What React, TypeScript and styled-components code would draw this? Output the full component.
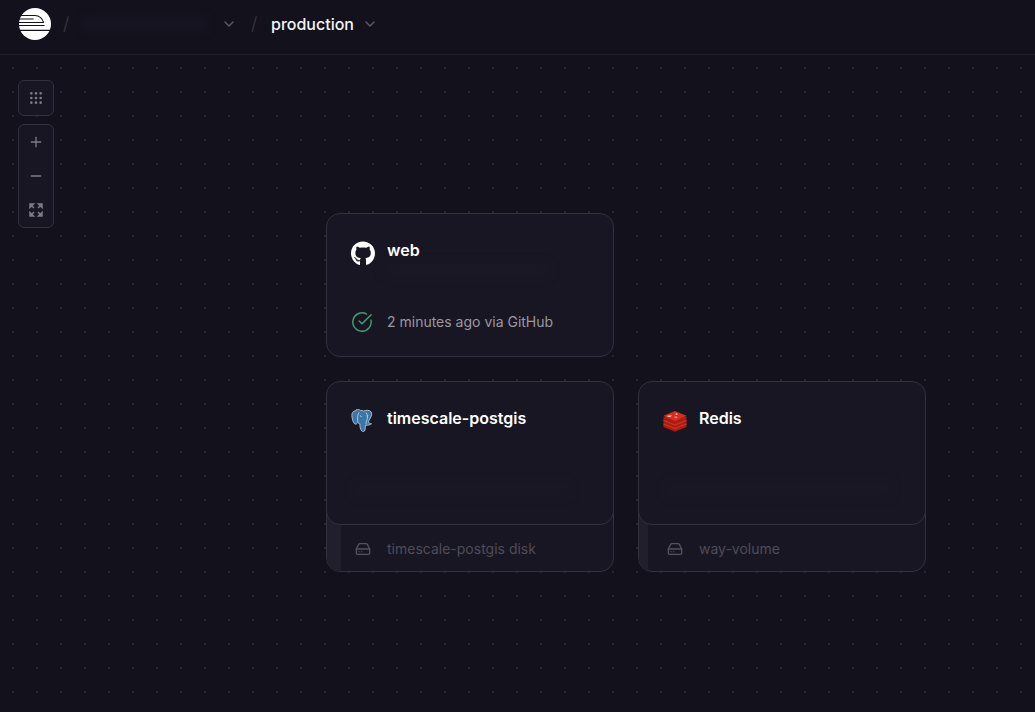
import React from "react";
import styled, { createGlobalStyle } from "styled-components";
import { ChevronDown, Plus, Minus, Grip, CircleCheckBig, HardDrive } from "lucide-react";
import { FaGithub } from "react-icons/fa";

const Global = createGlobalStyle`
  html, body { margin: 0; padding: 0; height: 100%; background: #13111c; overflow: hidden; }
  #root { height: 100%; }
  * { box-sizing: border-box; }
`;

const Page = styled.div`
  width: 1035px;
  height: 712px;
  display: flex;
  flex-direction: column;
  background: #13111c;
  font-family: Inter, "Liberation Sans", sans-serif;
`;

const Header = styled.header`
  height: 55px;
  flex: none;
  display: flex;
  align-items: center;
  padding: 0 0 7px 19px;
  border-bottom: 1px solid #211f2b;
`;

const Slash = styled.span<{ $gap: number }>`
  color: #3a3845;
  font-size: 18px;
  font-weight: 300;
  margin-left: ${(p) => p.$gap}px;
  width: 6px;
`;

const BlurredName = styled.div`
  width: 124px;
  height: 12px;
  margin-left: 14px;
  background: #171523;
  border-radius: 6px;
  filter: blur(5px);
`;

const Caret = styled(ChevronDown)<{ $gap: number }>`
  width: 16px;
  height: 16px;
  margin-left: ${(p) => p.$gap}px;
  color: #5e5c69;
  flex: none;
`;

const EnvName = styled.span`
  margin-left: 14px;
  color: #f4f4f6;
  font-size: 16px;
  line-height: 20px;
  font-weight: 500;
`;

const Canvas = styled.main`
  position: relative;
  flex: 1;
  background-color: #13111c;
  background-image: radial-gradient(circle at center, #272531 0.7px, transparent 1px);
  background-size: 24px 24px;
  background-position: 1px 1px;
`;

const Controls = styled.div`
  position: absolute;
  left: 18px;
  top: 25px;
  display: flex;
  flex-direction: column;
  gap: 8px;
`;

const ControlGroup = styled.div`
  width: 36px;
  display: flex;
  flex-direction: column;
  background: #181622;
  border: 1px solid #33313d;
  border-radius: 6px;
`;

const ControlButton = styled.button`
  height: 34px;
  padding: 0;
  display: flex;
  align-items: center;
  justify-content: center;
  border: none;
  background: transparent;
  color: #7d7b87;
`;

const Node = styled.section<{ $x: number; $y: number }>`
  position: absolute;
  left: ${(p) => p.$x}px;
  top: ${(p) => p.$y}px;
  width: 288px;
`;

const Card = styled.div<{ $h: number }>`
  position: relative;
  z-index: 1;
  height: ${(p) => p.$h}px;
  background: #181622;
  border: 1px solid #33313d;
  border-radius: 14px;
  overflow: hidden;
`;

const TitleRow = styled.div`
  display: flex;
  align-items: flex-start;
  height: 30px;
  margin-top: 26px;
  padding-left: 24px;
`;

const IconSlot = styled.div`
  width: 24px;
  height: 24px;
  margin: 1px 12px 0 0;
  flex: none;
  display: flex;
  align-items: center;
  justify-content: center;
  color: #fff;
`;

const Title = styled.h3`
  margin: 0;
  color: #fff;
  font-size: 16px;
  line-height: 20px;
  font-weight: 600;
`;

const BlurLine = styled.div<{ $x: number; $w: number; $y: number }>`
  position: absolute;
  left: ${(p) => p.$x}px;
  top: ${(p) => p.$y}px;
  width: ${(p) => p.$w}px;
  height: 8px;
  background: #1a1925;
  filter: blur(6px);
`;

const StatusRow = styled.div`
  display: flex;
  align-items: center;
  margin-top: 39px;
  padding-left: 24px;
  color: #9a98a3;
  font-size: 14px;
  line-height: 20px;
`;

const StatusIcon = styled(CircleCheckBig)`
  width: 22px;
  height: 22px;
  margin-left: -2px;
  color: #3f9e72;
  flex: none;
`;

const Volume = styled.div<{ $strip: number }>`
  height: 72px;
  margin-top: -25px;
  padding: 24px 0 0 ${(p) => p.$strip}px;
  background: #181622;
  border: 1px solid #33313d;
  border-radius: 14px;
  overflow: hidden;
  position: relative;
  display: flex;
  &::before {
    content: "";
    position: absolute;
    left: 0;
    top: 0;
    bottom: 0;
    width: ${(p) => p.$strip}px;
    background: #211f2b;
  }
`;

const VolumeRow = styled.div<{ $offset: number }>`
  display: flex;
  align-items: center;
  height: 47px;
  padding-left: ${(p) => p.$offset}px;
  color: #4e4c59;
  font-size: 14px;
`;

const VolumeIcon = styled(HardDrive)`
  width: 16px;
  height: 16px;
  margin-right: 16px;
  color: #54525f;
  flex: none;
`;

const Logo = () => (
  <svg width="32" height="32" viewBox="0 0 32 32" style={{ flex: "none" }}>
    <circle cx="16" cy="16" r="16" fill="#fff" />
    <path d="M0 7.500h16c3.800 0 7.200 2.600 8.700 7.200" stroke="#13111c" fill="none" strokeWidth="1.100" />
    <path d="M0 11h14.500M0 14.500h25M0 17.500h25.500M0 22.300h32" stroke="#13111c" fill="none" strokeWidth="1.200" />
  </svg>
);

const Fit = () => (
  <svg width="16" height="16" viewBox="0 0 16 16" fill="#7d7b87" stroke="#7d7b87" strokeWidth="1.500">
    <path d="M2 5.500V2h3.500z" />
    <path d="M2.500 2.500l3.500 3.500" />
    <path d="M14 5.500V2h-3.500z" />
    <path d="M13.500 2.500L10 6" />
    <path d="M2 10.500V14h3.500z" />
    <path d="M2.500 13.500L6 10" />
    <path d="M14 10.500V14h-3.500z" />
    <path d="M13.500 13.500L10 10" />
  </svg>
);

const Postgres = () => (
  <svg width="24" height="24" viewBox="0 0 24 24">
    <path
      d="M4.800 1.800C2 1.800.4 4 1 8c.4 2.900 1.300 6 2.900 7 1 .6 2-.3 2.800-1.400.8.700 1.500 1 2.100 1.100.1 2.200.3 5.300 1.700 7 1 1.200 3.100 1.100 3.500-.6.300-1.500.3-3.500.5-5 2 .6 4.800-.4 6-1.300-1.900-.3-3.200-1-3-2.500 1-1.700 2.600-4 3.100-6.400.5-2.700-1.100-4.600-4.300-4.600-1.500 0-2.800.3-3.700.7-1-.5-2.100-.7-3.100-.6-1.500-.9-2.800-1.200-3.700-1.200z"
      fill="#3b76a8"
      stroke="#b9c7d3"
      strokeWidth="0.9"
    />
    <path
      d="M8 3.500c-1.700 2.800-1.900 6.500-.9 10M15 3.500c1.800 2.200 2 5.300.8 8-.6 1.200-.9 2-.7 3.500M9.500 6.500c-.3 1.200.8 1.500 1.200.5M17 6.500c.3 1-.7 1.300-1.200.7"
      fill="none"
      stroke="#cbd8e2"
      strokeWidth="0.8"
    />
  </svg>
);

const Redis = () => (
  <svg width="24" height="24" viewBox="0 0 24 24">
    <path d="M.5 7.500V18L12 22.800 23.500 18V7.500z" fill="#a41e11" />
    <path d="M.5 11.300 12 16l11.500-4.700M.5 14.800 12 19.500l11.500-4.700" fill="none" stroke="#d82c20" strokeWidth="1.300" />
    <path d="M12 2 .5 6.800 12 12.300 23.500 6.800z" fill="#d82c20" />
    <path d="M4.500 6.500H9l-1.500 1.400h-3zM13.500 4l1.500 1.200-1.700.8-1.200-1zM10.500 8l3-.5 1 1.500z" fill="#f4b7b0" />
  </svg>
);

export default function App() {
  return (
    <Page>
      <Global />
      <Header>
        <Logo />
        <Slash $gap={12}>/</Slash>
        <BlurredName />
        <Caret $gap={14} />
        <Slash $gap={14}>/</Slash>
        <EnvName>production</EnvName>
        <Caret $gap={8} />
      </Header>
      <Canvas>
        <Controls>
          <ControlGroup>
            <ControlButton>
              <Grip size={16} strokeWidth={2} />
            </ControlButton>
          </ControlGroup>
          <ControlGroup>
            <ControlButton>
              <Plus size={16} strokeWidth={2} />
            </ControlButton>
            <ControlButton>
              <Minus size={16} strokeWidth={2} />
            </ControlButton>
            <ControlButton>
              <Fit />
            </ControlButton>
          </ControlGroup>
        </Controls>

        <Node $x={326} $y={158}>
          <Card $h={144}>
            <TitleRow>
              <IconSlot>
                <FaGithub size={25} />
              </IconSlot>
              <Title>web</Title>
            </TitleRow>
            <BlurLine $x={60} $w={160} $y={52} />
            <StatusRow>
              <IconSlot>
                <StatusIcon strokeWidth={1.6} />
              </IconSlot>
              2 minutes ago via GitHub
            </StatusRow>
          </Card>
        </Node>

        <Node $x={326} $y={326}>
          <Card $h={144}>
            <TitleRow>
              <IconSlot>
                <Postgres />
              </IconSlot>
              <Title>timescale-postgis</Title>
            </TitleRow>
            <BlurLine $x={30} $w={210} $y={103} />
          </Card>
          <Volume $strip={14}>
            <VolumeRow $offset={14}>
              <VolumeIcon />
              timescale-postgis disk
            </VolumeRow>
          </Volume>
        </Node>

        <Node $x={638} $y={326}>
          <Card $h={144}>
            <TitleRow>
              <IconSlot>
                <Redis />
              </IconSlot>
              <Title>Redis</Title>
            </TitleRow>
            <BlurLine $x={30} $w={220} $y={103} />
          </Card>
          <Volume $strip={9}>
            <VolumeRow $offset={19}>
              <VolumeIcon />
              way-volume
            </VolumeRow>
          </Volume>
        </Node>
      </Canvas>
    </Page>
  );
}
